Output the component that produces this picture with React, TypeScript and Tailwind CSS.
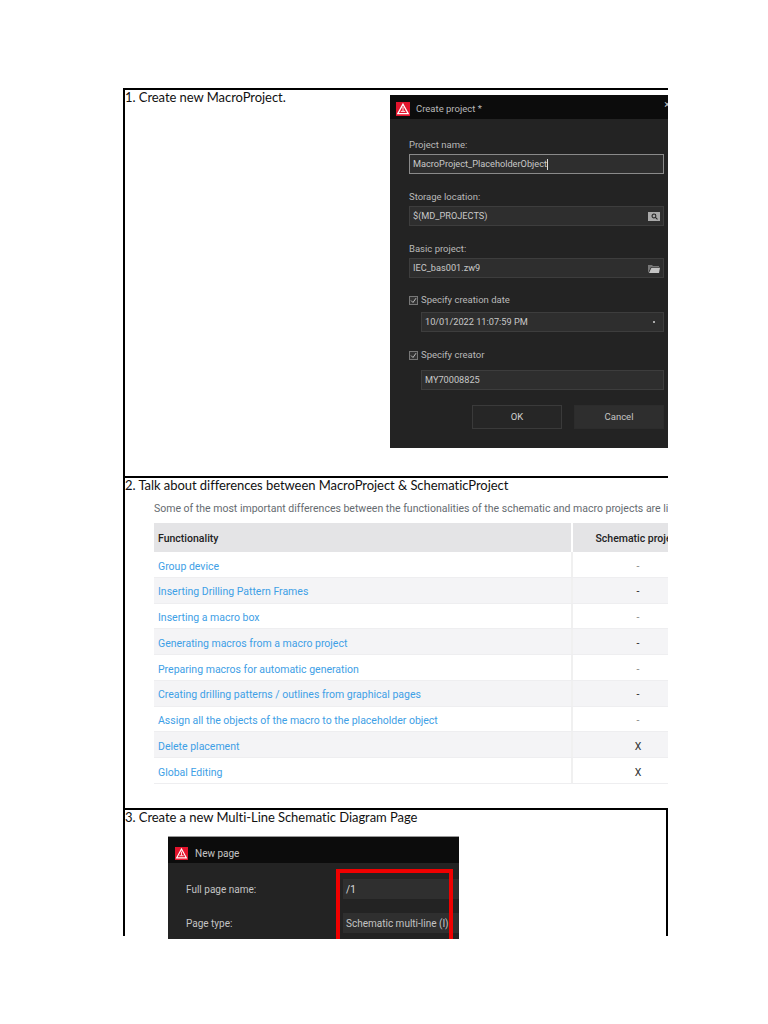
const uiFont = "font-['Roboto',sans-serif]";

function WarnLogo({ size = 14 }: { size?: number }) {
  return (
    <svg width={size} height={size} viewBox="0 0 14 14" className="shrink-0">
      <rect width="14" height="14" fill="#e3142d" />
      <path d="M7 2.2 L12.2 11.6 H1.8 Z" fill="none" stroke="#fff" strokeWidth="1.3" />
      <path d="M7 5 V9 M4.8 9.4 L9.2 9.4" stroke="#fff" strokeWidth="0.9" />
    </svg>
  );
}

function Check() {
  return (
    <span className="w-[9px] h-[9px] border border-[#777] bg-[#333] flex items-center justify-center">
      <svg width="7" height="7" viewBox="0 0 7 7"><path d="M1 3.5 L3 5.5 L6 1.2" fill="none" stroke="#bbb" strokeWidth="1" /></svg>
    </span>
  );
}

function Field({ text, children, border = 'border-[#3d3d3d]', className = '' }: { text: React.ReactNode; children?: React.ReactNode; border?: string; className?: string }) {
  return (
    <div className={`h-[20px] border bg-[#2e2e2e] flex items-center justify-between pl-[3px] pr-[3px] text-[9.2px] text-[#c8c8c8] ${border} ${className}`}>
      <span className="truncate">{text}</span>
      {children}
    </div>
  );
}

function CreateProjectDialog() {
  return (
    <div className={`w-[278px] h-[353px] bg-[#232323] text-[#b9b9b9] text-[9.5px] overflow-hidden ${uiFont}`}>
      <div className="h-[24px] pt-[4px] bg-[#0c0c0c] flex items-center pl-[6px] gap-[6px] relative">
        <WarnLogo />
        <span>Create project *</span>
        <span className="absolute right-[-2px] top-[2px] text-[11px] text-[#ccc]">×</span>
      </div>
      <div className="pl-[19px] pr-[4px]">
        <div className="mt-[19px] mb-[2px] h-[14px] leading-[14px]">Project name:</div>
        <Field text={<>MacroProject_PlaceholderObject<span className="inline-block w-px h-[11px] bg-[#ddd] align-middle" /></>} border="border-[#8a8a8a]" />
        <div className="mt-[16px] mb-[2px] h-[14px] leading-[14px]">Storage location:</div>
        <Field text="$(MD_PROJECTS)">
          <span className="w-[12px] h-[9px] bg-[#a9a9a9] flex items-center justify-center">
            <svg width="7" height="7" viewBox="0 0 8 8"><circle cx="3.4" cy="3.4" r="2.2" fill="none" stroke="#222" strokeWidth="1.2" /><path d="M5 5 L7.4 7.4" stroke="#222" strokeWidth="1.2" /></svg>
          </span>
        </Field>
        <div className="mt-[16px] mb-[2px] h-[14px] leading-[14px]">Basic project:</div>
        <Field text="IEC_bas001.zw9">
          <svg width="12" height="9" viewBox="0 0 12 9"><path d="M0 9 V1 H4 L5 2 H11 V3 H3 L0 9 Z" fill="#777" /><path d="M1 9 L3.4 3.8 H12 L11 9 Z" fill="#c4c4c4" /></svg>
        </Field>
        <div className="mt-[15px] h-[14px] flex items-center gap-[3px]">
          <Check />
          <span>Specify creation date</span>
        </div>
        <Field text="10/01/2022 11:07:59 PM" className="ml-[12px] mt-[5px]">
          <span className="w-[2px] h-[2px] bg-[#aaa] mr-[5px]" />
        </Field>
        <div className="mt-[16px] h-[14px] flex items-center gap-[3px]">
          <Check />
          <span>Specify creator</span>
        </div>
        <Field text="MY70008825" className="ml-[12px] mt-[8px]" />
        <div className="mt-[15px] flex justify-end gap-[12px]">
          <div className="w-[90px] h-[24px] border border-[#3a3a3a] bg-[#262626] flex items-center justify-center text-[#d0d0d0]">OK</div>
          <div className="w-[90px] h-[24px] border border-[#2c2c2c] bg-[#2e2e2e] flex items-center justify-center text-[#c4c4c4]">Cancel</div>
        </div>
      </div>
    </div>
  );
}

const rows: [string, string][] = [
  ['Group device', '-'],
  ['Inserting Drilling Pattern Frames', '-'],
  ['Inserting a macro box', '-'],
  ['Generating macros from a macro project', '-'],
  ['Preparing macros for automatic generation', '-'],
  ['Creating drilling patterns / outlines from graphical pages', '-'],
  ['Assign all the objects of the macro to the placeholder object', '-'],
  ['Delete placement', 'X'],
  ['Global Editing', 'X'],
];

function DiffTable() {
  return (
    <div className="ml-[29px] font-['Roboto',sans-serif] text-[10.5px]">
      <div className="mt-[10px] h-[14px] leading-[14px] text-[#666b70] whitespace-nowrap overflow-hidden">
        Some of the most important differences between the functionalities of the schematic and macro projects are listed
      </div>
      <div className="mt-[7px] flex h-[29px] pt-[2px] w-[549px] bg-[#e4e4e6] font-medium text-[#222]">
        <div className="w-[417px] shrink-0 pl-[4px] flex items-center">Functionality</div>
        <div className="w-[2px] shrink-0 -mt-[2px] bg-white" />
        <div className="w-[130px] shrink-0 flex items-center justify-center whitespace-nowrap">Schematic project</div>
      </div>
      {rows.map(([name, value], i) => (
        <div key={name} className={`flex w-[549px] h-[25.78px] border-b border-[#eeeef0] pt-[4px] ${i % 2 ? 'bg-[#f4f4f6]' : 'bg-white'}`}>
          <div className="w-[417px] shrink-0 pl-[4px] flex items-center text-[#3ea0e6] whitespace-nowrap">{name}</div>
          <div className="w-[2px] shrink-0 -mt-[4px] bg-[#f0f0f0]" />
          <div className={`w-[130px] shrink-0 flex items-center justify-center ${value === 'X' ? 'text-[#333]' : i % 2 ? 'text-[#222]' : 'text-[#888]'}`}>{value}</div>
        </div>
      ))}
    </div>
  );
}

function NewPageDialog() {
  return (
    <div className={`ml-[43px] mt-[12px] w-[291px] h-[103px] bg-[#232323] overflow-hidden text-[10px] text-[#c4c4c4] relative border-t border-[#999] ${uiFont}`}>
      <div className="h-[26px] pt-[6px] bg-[#0c0c0c] flex items-center pl-[7px] gap-[7px]">
        <WarnLogo size={13} />
        <span>New page</span>
      </div>
      <div className="flex items-center mt-[16px] pl-[18px]">
        <span className="w-[157px]">Full page name:</span>
        <div className="flex-1 h-[20px] bg-[#2f2f2f] pl-[3px] flex items-center text-[#ddd]">/1</div>
      </div>
      <div className="flex items-center mt-[14px] pl-[18px]">
        <span className="w-[157px]">Page type:</span>
        <div className="flex-1 h-[20px] bg-[#2f2f2f] pl-[3px] flex items-center whitespace-nowrap">Schematic multi-line (I)</div>
      </div>
      <div className="absolute left-[168px] top-[32px] w-[117px] h-[80px] border-[4px] border-[#f00000]" />
    </div>
  );
}

function Heading({ children }: { children: React.ReactNode }) {
  return <div className="text-[13px] leading-[14px] text-[#111] tracking-[-0.05px] font-['Lato','Liberation_Sans',sans-serif]">{children}</div>;
}

export default function App() {
  return (
    <div className="w-[768px] h-[1024px] bg-white pt-[88px] pl-[123px] overflow-hidden">
      <div className="w-[545px] h-[848px] border-l-2 border-black">
        {/* step 1 */}
        <section className="h-[388px] border-t-2 border-black flex justify-between">
          <Heading>1. Create new MacroProject.</Heading>
          <div className="mt-[5px]">
            <CreateProjectDialog />
          </div>
        </section>
        {/* step 2 */}
        <section className="h-[332px] border-t-2 border-black overflow-hidden">
          <Heading>2. Talk about differences between MacroProject &amp; SchematicProject</Heading>
          <DiffTable />
        </section>
        {/* step 3 */}
        <section className="h-[128px] border-t-2 border-r-2 border-black">
          <Heading>3. Create a new Multi-Line Schematic Diagram Page</Heading>
          <NewPageDialog />
        </section>
      </div>
    </div>
  );
}
